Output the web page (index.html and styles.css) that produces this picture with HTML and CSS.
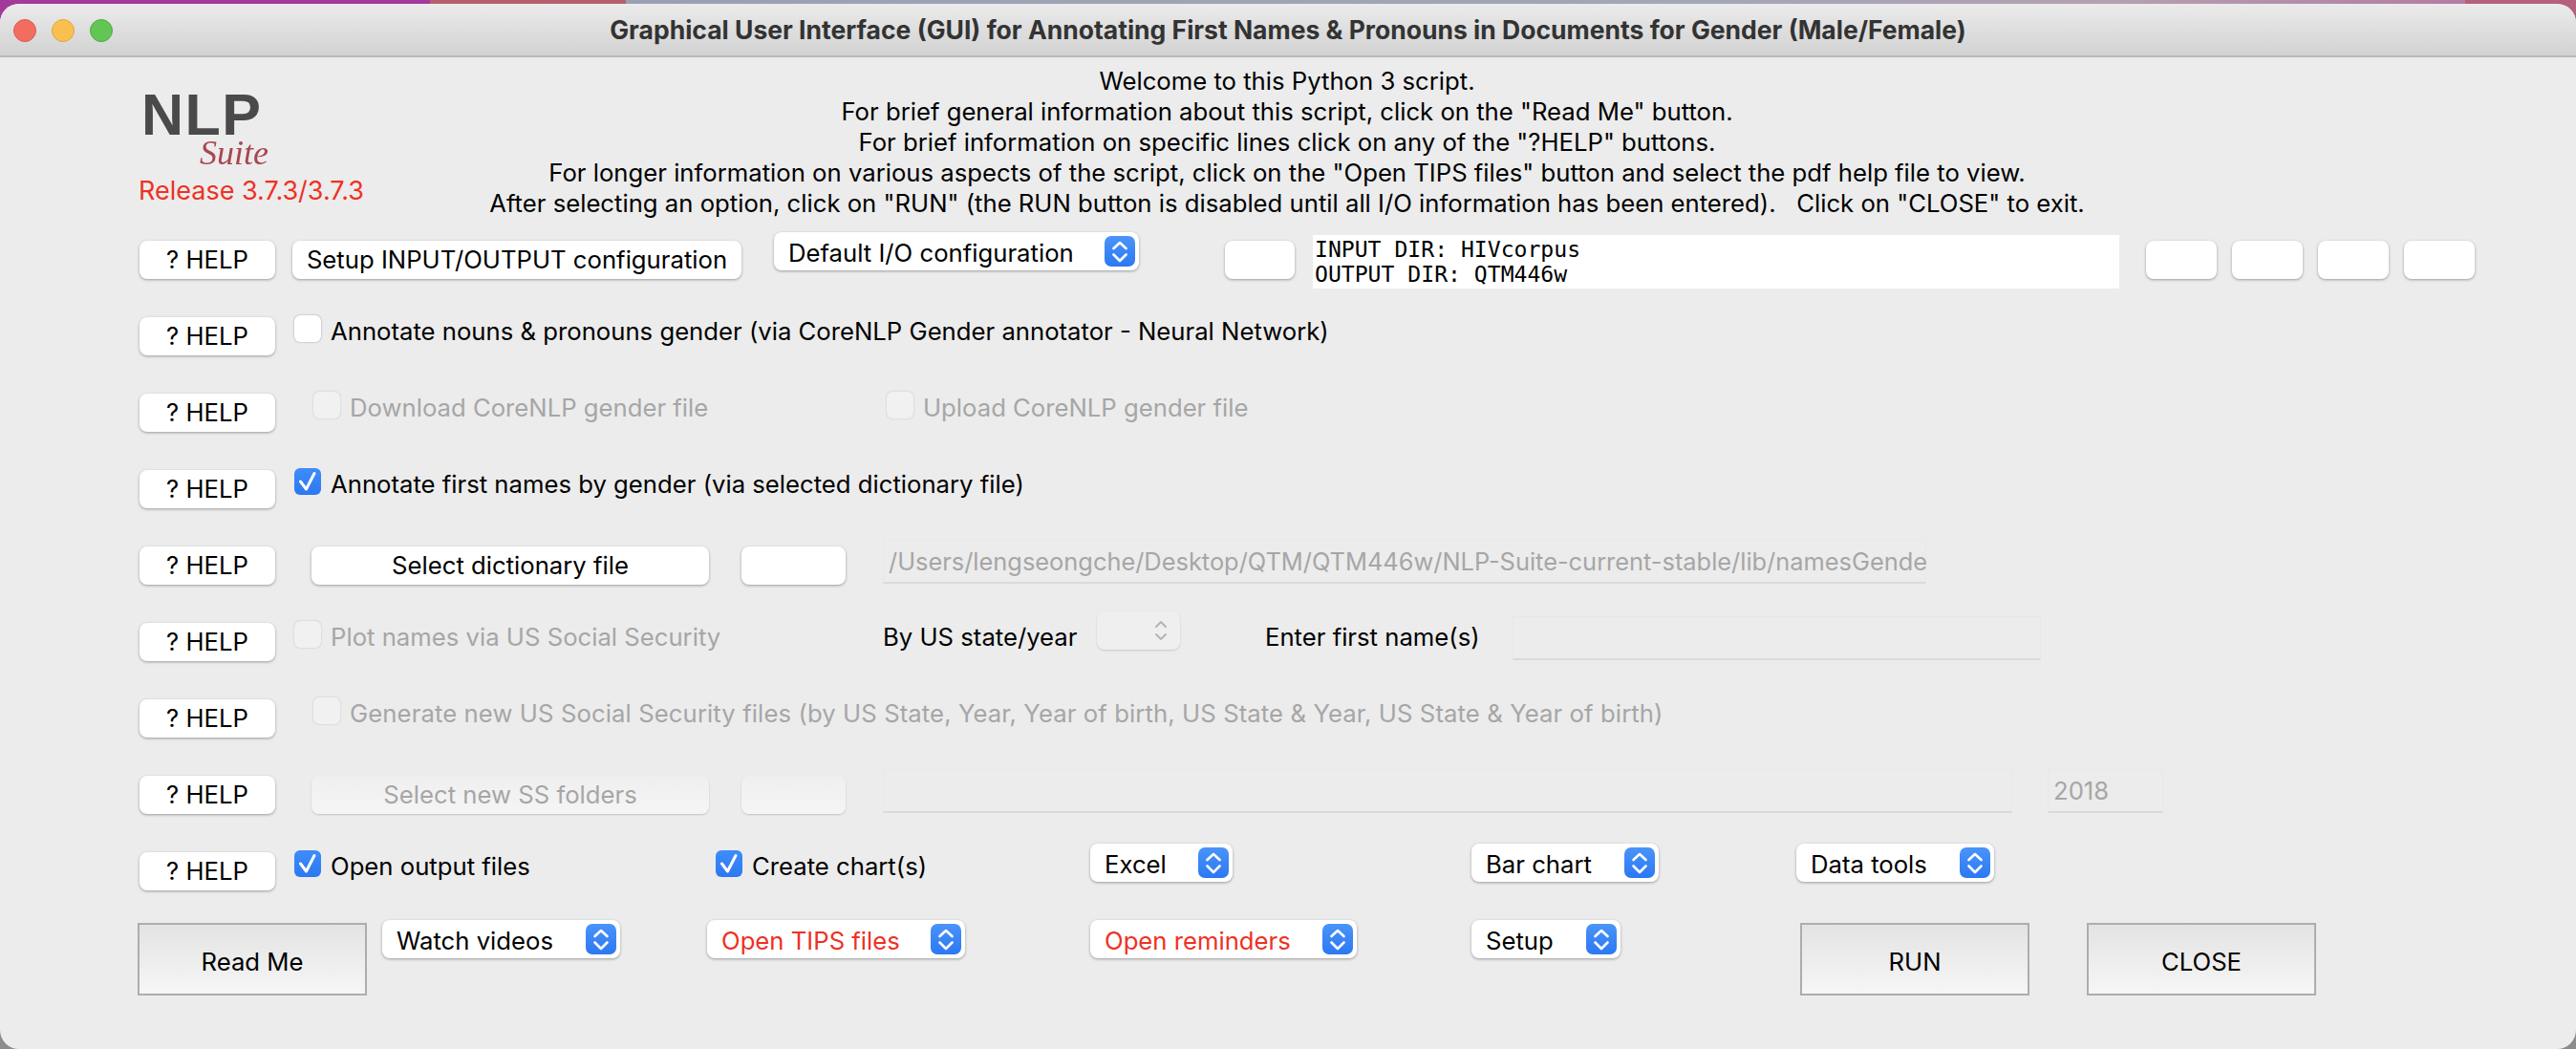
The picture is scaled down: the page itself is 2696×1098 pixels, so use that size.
FILE: index.html
```html
<!DOCTYPE html>
<html lang="en">
<head>
    <meta charset="UTF-8">
    <meta name="viewport" content="width=device-width, initial-scale=1.0">
    <title>NLP Suite - Gender Annotator</title>
    <link rel="stylesheet" href="styles.css">
</head>
<body>
    <svg width="0" height="0" class="defs">
        <symbol id="updown" viewBox="0 0 32 32">
            <path d="M9.5 13 L16 7 L22.5 13 M9.5 19.5 L16 26 L22.5 19.5" fill="none" stroke="#fff" stroke-width="2.6" stroke-linecap="round" stroke-linejoin="round"/>
        </symbol>
        <symbol id="updown-grey" viewBox="0 0 32 32">
            <path d="M11 12 L16 7 L21 12 M11 20 L16 25 L21 20" fill="none" stroke="#b5b5b5" stroke-width="2" stroke-linecap="round" stroke-linejoin="round"/>
        </symbol>
        <symbol id="tick" viewBox="0 0 28 28">
            <path d="M6.5 14 L12.5 22 L21 5.5" fill="none" stroke="#fff" stroke-width="3" stroke-linecap="round" stroke-linejoin="round"/>
        </symbol>
    </svg>

    <div class="window">
        <div class="titlebar">
            <div class="lights">
                <span class="light red"></span>
                <span class="light yellow"></span>
                <span class="light green"></span>
            </div>
            <div class="title">Graphical User Interface (GUI) for Annotating First Names &amp; Pronouns in Documents for Gender (Male/Female)</div>
        </div>

        <!-- logo and welcome text -->
        <div class="top">
            <div class="logo">
                <div class="logo-nlp">NLP</div>
                <div class="logo-suite">Suite</div>
                <div class="release">Release 3.7.3/3.7.3</div>
            </div>
            <div class="welcome">
                <p>Welcome to this Python 3 script.</p>
                <p>For brief general information about this script, click on the "Read Me" button.</p>
                <p>For brief information on specific lines click on any of the "?HELP" buttons.</p>
                <p>For longer information on various aspects of the script, click on the "Open TIPS files" button and select the pdf help file to view.</p>
                <p>After selecting an option, click on "RUN" (the RUN button is disabled until all I/O information has been entered). &nbsp; Click on "CLOSE" to exit.</p>
            </div>
        </div>

        <!-- I/O -->
        <div class="row">
            <div class="btn help">? HELP</div>
            <div class="btn setup">Setup INPUT/OUTPUT configuration</div>
            <div class="select io"><span>Default I/O configuration</span><i class="stepper"><svg><use href="#updown"/></svg></i></div>
            <div class="btn small io-open"></div>
            <div class="iobox">INPUT DIR: HIVcorpus<br>OUTPUT DIR: QTM446w</div>
            <div class="btn small2 first"></div>
            <div class="btn small2"></div>
            <div class="btn small2"></div>
            <div class="btn small2"></div>
        </div>

        <div class="row">
            <div class="btn help">? HELP</div>
            <div class="check near"><i class="box"></i><label>Annotate nouns &amp; pronouns gender (via CoreNLP Gender annotator - Neural Network)</label></div>
        </div>

        <div class="row">
            <div class="btn help">? HELP</div>
            <div class="check indent off download"><i class="box"></i><label>Download CoreNLP gender file</label></div>
            <div class="check off upload"><i class="box"></i><label>Upload CoreNLP gender file</label></div>
        </div>

        <div class="row">
            <div class="btn help">? HELP</div>
            <div class="check near"><i class="box on"><svg><use href="#tick"/></svg></i><label>Annotate first names by gender (via selected dictionary file)</label></div>
        </div>

        <div class="row">
            <div class="btn help">? HELP</div>
            <div class="btn wide">Select dictionary file</div>
            <div class="btn small open"></div>
            <div class="entry path">/Users/lengseongche/Desktop/QTM/QTM446w/NLP-Suite-current-stable/lib/namesGende</div>
        </div>

        <div class="row">
            <div class="btn help">? HELP</div>
            <div class="check near off plot"><i class="box"></i><label>Plot names via US Social Security</label></div>
            <div class="plain state">By US state/year</div>
            <div class="select spin"><i class="stepper grey"><svg><use href="#updown-grey"/></svg></i></div>
            <div class="plain first-name">Enter first name(s)</div>
            <div class="entry names"></div>
        </div>

        <div class="row">
            <div class="btn help">? HELP</div>
            <div class="check indent off generate"><i class="box"></i><label>Generate new US Social Security files (by US State, Year, Year of birth, US State &amp; Year, US State &amp; Year of birth)</label></div>
        </div>

        <div class="row">
            <div class="btn help">? HELP</div>
            <div class="btn wide disabled">Select new SS folders</div>
            <div class="btn small open disabled"></div>
            <div class="entry folders"></div>
            <div class="entry year">2018</div>
        </div>

        <div class="row">
            <div class="btn help">? HELP</div>
            <div class="check near output"><i class="box on"><svg><use href="#tick"/></svg></i><label>Open output files</label></div>
            <div class="check charts"><i class="box on"><svg><use href="#tick"/></svg></i><label>Create chart(s)</label></div>
            <div class="select excel"><span>Excel</span><i class="stepper"><svg><use href="#updown"/></svg></i></div>
            <div class="select bar"><span>Bar chart</span><i class="stepper"><svg><use href="#updown"/></svg></i></div>
            <div class="select tools"><span>Data tools</span><i class="stepper"><svg><use href="#updown"/></svg></i></div>
        </div>

        <div class="row last">
            <div class="big">Read Me</div>
            <div class="select videos"><span>Watch videos</span><i class="stepper"><svg><use href="#updown"/></svg></i></div>
            <div class="select tips red-text"><span>Open TIPS files</span><i class="stepper"><svg><use href="#updown"/></svg></i></div>
            <div class="select reminders red-text"><span>Open reminders</span><i class="stepper"><svg><use href="#updown"/></svg></i></div>
            <div class="select setup-menu"><span>Setup</span><i class="stepper"><svg><use href="#updown"/></svg></i></div>
            <div class="big run">RUN</div>
            <div class="big close">CLOSE</div>
        </div>
    </div>
</body>
</html>
```

FILE: styles.css
```css
* {
    box-sizing: border-box;
}
html, body {
    margin: 0;
    height: 100%;
    overflow: hidden;
}
body {
    font-family: Inter, "Liberation Sans", sans-serif;
    font-size: 25.7px;
    color: #000;
    padding-top: 4px;
    background: linear-gradient(90deg, #a5389b 0, #a5389b 450px, #b5606f 450px, #b5606f 655px, #9aa0b4 655px, #a3a6b8 1800px, #b4a0b0 2220px, #b47ca4 2580px, #b4607e 2580px) top / 100% 40px no-repeat, #8c8c8c;
}
.defs {
    display: block;
    height: 0;
}
.window {
    height: 1094px;
    background-color: #ececec;
    border-radius: 20px;
    overflow: hidden;
}

/* title bar */
.titlebar {
    height: 56px;
    display: flex;
    align-items: center;
    justify-content: center;
    background: linear-gradient(#ebebeb, #d2d2d2);
    border-bottom: 2px solid #b9b9b9;
    position: relative;
}
.lights {
    position: absolute;
    left: 14px;
    top: 16px;
    display: flex;
    gap: 16px;
}
.light {
    width: 24px;
    height: 24px;
    border-radius: 50%;
}
.red { background-color: #f26d60; border: 1px solid #dc5a50; }
.yellow { background-color: #f9c04f; border: 1px solid #e0a53c; }
.green { background-color: #62c554; border: 1px solid #50ab45; }
.title {
    font-weight: 700;
    font-size: 26.5px;
    color: #333;
}

/* logo + welcome */
.top {
    height: 180px;
    padding-left: 146px;
    padding-right: 398px;
    display: flex;
}
.logo {
    width: 250px;
    padding-top: 35px;
    flex-shrink: 0;
}
.logo-nlp {
    font-family: "Liberation Sans", sans-serif;
    font-weight: 700;
    font-size: 61px;
    line-height: 50px;
    letter-spacing: 1.5px;
    color: #4a4a4a;
    padding-left: 2px;
    filter: blur(0.6px);
}
.logo-suite {
    font-family: "Liberation Serif", serif;
    font-style: italic;
    font-size: 36px;
    line-height: 30px;
    color: #a9464f;
    padding-left: 63px;
    filter: blur(0.4px);
}
.release {
    font-size: 27px;
    line-height: 30px;
    color: #ee3124;
    margin: 10px 0 0 -1px;
    white-space: nowrap;
}
.welcome {
    flex: 1;
    text-align: center;
    padding-top: 9px;
    white-space: nowrap;
}
.welcome p {
    margin: 0;
    line-height: 32px;
}

/* rows */
.row {
    height: 80px;
    padding-left: 146px;
    display: flex;
    align-items: flex-start;
}
.row.last {
    padding-left: 144px;
}
.btn {
    height: 40px;
    margin-top: 12px;
    padding-bottom: 2px;
    background-color: #fff;
    border-radius: 8px;
    box-shadow: 0 1px 3px rgba(0, 0, 0, 0.35);
    display: flex;
    align-items: center;
    justify-content: center;
    white-space: nowrap;
}
.btn.disabled {
    background: linear-gradient(#efefef, #f5f5f5);
    color: #a6a6a6;
    box-shadow: 0 1px 2px rgba(0, 0, 0, 0.18);
}
.help { width: 142px; }
.setup { width: 470px; margin-left: 18px; }
.small { width: 109px; margin-left: 34px; }
.wide { width: 416px; margin-left: 38px; }
.io-open { width: 73px; margin-left: 90px; }
.small2 { width: 74px; margin-left: 16px; }
.small2.first { margin-left: 28px; }

.iobox {
    width: 844px;
    height: 56px;
    margin: 6px 0 0 19px;
    padding: 2px 2px;
    background-color: #fff;
    font-family: "DejaVu Sans Mono", monospace;
    font-size: 23.1px;
    line-height: 26px;
}

/* checkbuttons */
.check {
    display: flex;
    gap: 10px;
    margin-top: 10px;
    white-space: nowrap;
}
.check label {
    line-height: 30px;
    padding-top: 2px;
}
.box {
    width: 28px;
    height: 28px;
    background-color: #fff;
    border-radius: 6px;
    box-shadow: 0 0 2px rgba(0, 0, 0, 0.4);
    flex-shrink: 0;
}
.box.on {
    background: linear-gradient(#3f8cfa, #2c78f2);
    box-shadow: none;
}
.box svg {
    display: block;
    width: 28px;
    height: 28px;
}
.near { margin-left: 20px; }
.indent { margin-left: 40px; }
.off .box {
    background-color: #f1f1f1;
    box-shadow: 0 0 2px rgba(0, 0, 0, 0.22);
}
.off label { color: #a6a6a6; }
.download { width: 600px; }
.generate label { letter-spacing: 0.09px; }

/* option menus */
.select {
    height: 40px;
    margin-top: 3px;
    padding: 4px 4px 4px 15px;
    background-color: #fff;
    border-radius: 8px;
    box-shadow: 0 1px 3px rgba(0, 0, 0, 0.35);
    display: flex;
    justify-content: space-between;
    align-items: center;
    white-space: nowrap;
}
.select span {
    padding-top: 2px;
}
.stepper {
    width: 32px;
    height: 32px;
    background: linear-gradient(#4a94fa, #2c78f2);
    border-radius: 7px;
    flex-shrink: 0;
}
.stepper svg {
    display: block;
    width: 32px;
    height: 32px;
}
.stepper.grey {
    background: none;
}
.io { width: 382px; margin-left: 34px; }
.bar { width: 196px; margin-left: 250px; }
.excel { width: 149px; }
.tools { width: 207px; margin-left: 144px; }
.videos { width: 249px; margin-left: 16px; }
.tips { width: 270px; margin-left: 91px; }
.reminders { width: 279px; margin-left: 131px; }
.setup-menu { width: 156px; margin-left: 120px; }
.red-text { color: #ee3124; }

.output { width: 441px; }
.charts { width: 392px; }

/* text entries, all of them greyed out here */
.entry {
    height: 46px;
    margin: 5px 0 0 39px;
    padding: 6px 5px 0;
    background-color: #ececec;
    border: 1px solid #e8e8e8;
    border-bottom: 2px solid #dadada;
    color: #a6a6a6;
    white-space: nowrap;
}
.path { width: 1092px; font-size: 25.4px; padding-right: 0; }
.names { width: 553px; margin-left: 1px; }
.folders { width: 1182px; }
.year { width: 121px; margin-left: 37px; }

.plain {
    margin-top: 12px;
    line-height: 30px;
    white-space: nowrap;
}
.plot { width: 616px; }
.state { width: 224px; }
.spin {
    width: 87px;
    margin-top: 0;
    justify-content: flex-end;
    background-color: #efefef;
    box-shadow: 0 1px 2px rgba(0, 0, 0, 0.15);
}
.first-name { width: 258px; margin-left: 89px; }

/* tk push buttons, bottom row */
.big {
    width: 240px;
    height: 76px;
    margin-top: 6px;
    padding-top: 4px;
    border: 2px solid #adadad;
    background: linear-gradient(#e3e3e3, #f6f6f6);
    display: flex;
    align-items: center;
    justify-content: center;
}
.run { margin-left: 188px; }
.close { margin-left: 60px; }
```
